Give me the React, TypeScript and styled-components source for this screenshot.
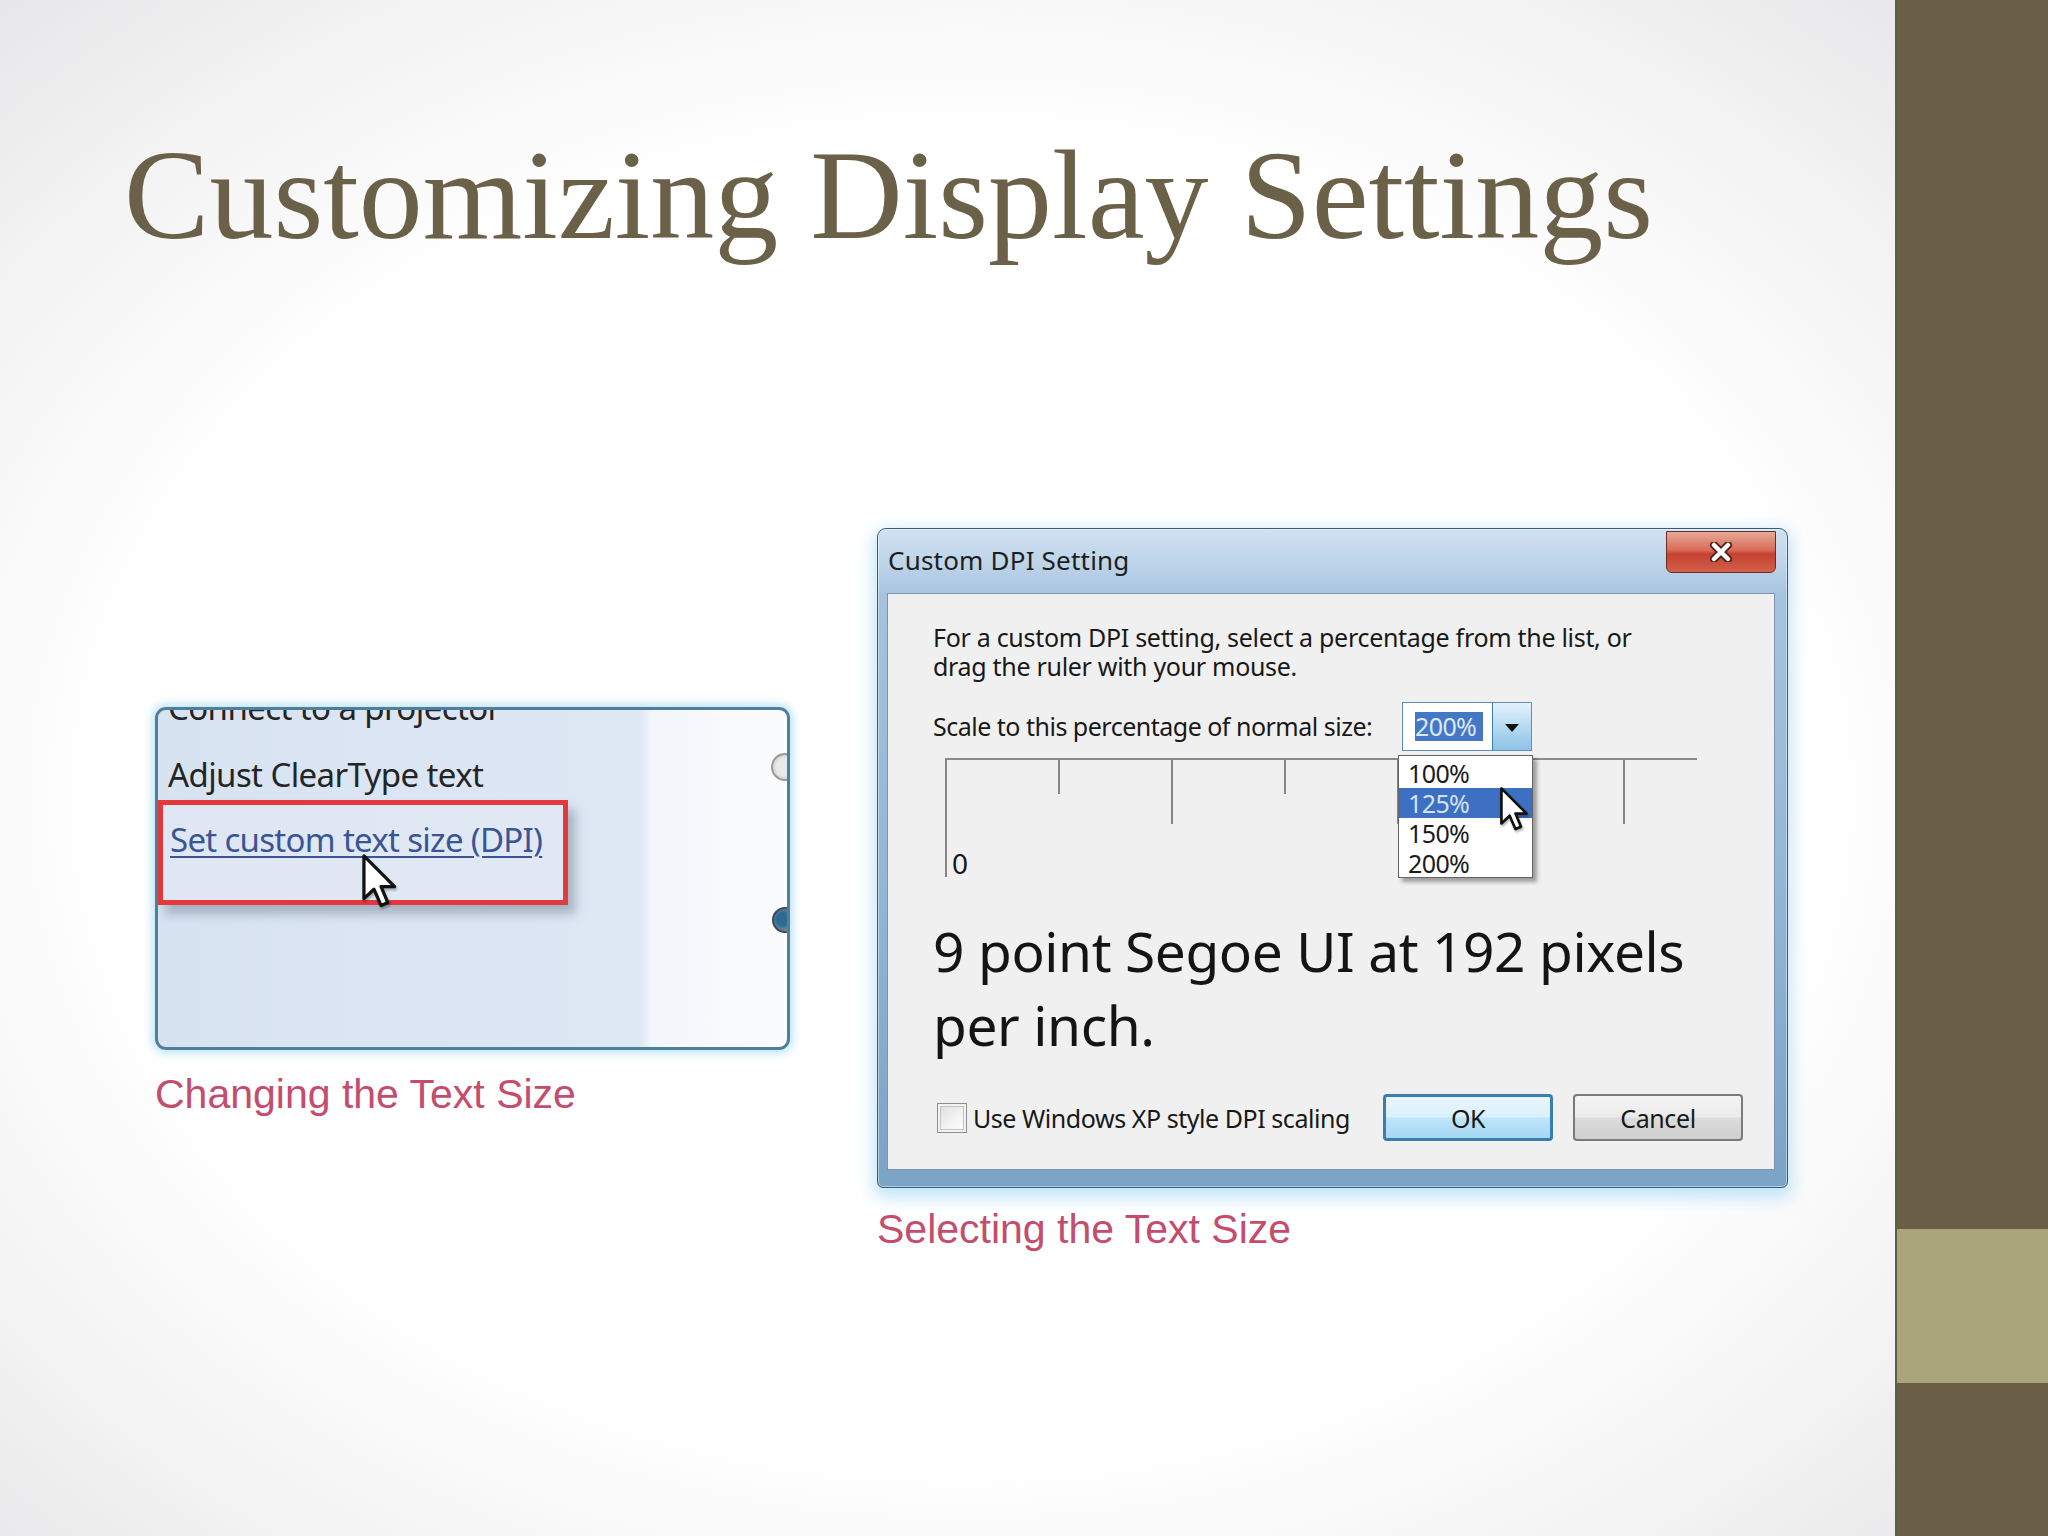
import styled, { createGlobalStyle } from "styled-components";

const GlobalStyle = createGlobalStyle`
  *, *::before, *::after {
    box-sizing: border-box;
  }
  html, body {
    margin: 0;
    padding: 0;
  }
  body {
    width: 2048px;
    height: 1536px;
    overflow: hidden;
    font-family: "Noto Sans", sans-serif;
  }
`;

const Slide = styled.div`
  display: flex;
  width: 2048px;
  height: 1536px;
  background: radial-gradient(
    ellipse 72% 74% at 47% 52%,
    #ffffff 58%,
    #f2f2f3 80%,
    #e4e4e6 100%
  );
`;

const Content = styled.main`
  flex: 1;
  display: flex;
  flex-direction: column;
`;

const Title = styled.h1`
  margin: 131px 0 0 124px;
  font-family: "Liberation Serif", "Times New Roman", serif;
  font-weight: 400;
  font-size: 128px;
  line-height: 128px;
  color: #6a6148;
  white-space: nowrap;
`;

const Figures = styled.div`
  display: flex;
  align-items: flex-start;
  gap: 87px;
  margin: 269px 0 0 155px;
`;

const Figure = styled.figure<{ $offset?: number }>`
  margin: ${(p) => p.$offset ?? 0}px 0 0;
  display: flex;
  flex-direction: column;
`;

const Caption = styled.figcaption<{ $gap: number }>`
  margin-top: ${(p) => p.$gap}px;
  font-family: "Liberation Sans", Arial, sans-serif;
  font-size: 41px;
  line-height: 48px;
  color: #c44c6c;
  white-space: nowrap;
`;

const Sidebar = styled.aside`
  flex: none;
  width: 153px;
  display: flex;
  flex-direction: column;
  background: #6a5e47;
  border-left: 2px solid #5d6048;
`;

const SidebarBand = styled.div`
  margin-top: 1229px;
  height: 154px;
  background: #aba57c;
`;

/* ---------- mouse pointer ---------- */

const Pointer = styled.svg<{ $x: number; $y: number }>`
  position: absolute;
  left: ${(p) => p.$x}px;
  top: ${(p) => p.$y}px;
  filter: drop-shadow(1px 2px 1px rgba(0, 0, 0, 0.3));
`;

const Arrow = ({ x, y, h }: { x: number; y: number; h: number }) => (
  <Pointer $x={x} $y={y} width={(h * 13) / 19} height={h} viewBox="0 0 13 19">
    <path
      d="M1 1 L1 15.5 L4.4 12.3 L6.8 17.8 L9.1 16.8 L6.8 11.4 L11.4 11.4 Z"
      fill="#ffffff"
      stroke="#111111"
      strokeWidth="1.1"
      strokeLinejoin="round"
    />
  </Pointer>
);

/* ---------- control panel snippet ---------- */

const Panel = styled.div`
  position: relative;
  width: 635px;
  height: 343px;
  padding-left: 10px;
  border: 3px solid #4f7f99;
  border-radius: 11px;
  overflow: hidden;
  background: linear-gradient(
    90deg,
    #d8e3f2 0%,
    #dee7f4 76.5%,
    #f3f6fb 78.5%,
    #fbfcfe 100%
  );
  box-shadow: 0 0 9px 3px rgba(165, 218, 244, 0.75);
  font-family: "Noto Sans", "Open Sans", sans-serif;
`;

const PanelItem = styled.div<{ $top: number }>`
  margin-top: ${(p) => p.$top}px;
  font-size: 33px;
  line-height: 40px;
  letter-spacing: -0.6px;
  color: #242424;
  white-space: nowrap;
`;

const Highlight = styled.div`
  position: relative;
  margin: 5px 0 0 -10px;
  width: 410px;
  height: 105px;
  padding: 15px 0 0 7px;
  border: 5px solid #e3393c;
  background: rgba(226, 234, 244, 0.6);
  box-shadow: 7px 9px 10px rgba(70, 80, 100, 0.35);
`;

const PanelLink = styled.a`
  display: block;
  font-size: 33px;
  line-height: 40px;
  letter-spacing: -0.7px;
  color: #3a5495;
  text-decoration: underline;
  text-decoration-thickness: 2px;
  text-underline-offset: 4px;
  white-space: nowrap;
`;

const EdgeKnob = styled.span<{ $top: number; $size: number; $dark?: boolean }>`
  position: absolute;
  right: -${(p) => p.$size / 2 - 2}px;
  top: ${(p) => p.$top}px;
  width: ${(p) => p.$size}px;
  height: ${(p) => p.$size}px;
  border-radius: 50%;
  border: 2px solid ${(p) => (p.$dark ? "#3c4a58" : "#9a9a9a")};
  background: ${(p) =>
    p.$dark
      ? "radial-gradient(circle at 40% 45%, #2d6b93 0 35%, #7d8c99 70%)"
      : "radial-gradient(circle, #e9e9e9 0 50%, #bdbdbd 100%)"};
`;

/* ---------- Custom DPI dialog ---------- */

const Window = styled.div`
  width: 911px;
  height: 660px;
  display: flex;
  flex-direction: column;
  padding: 0 12px 17px 9px;
  border: 1px solid #2f607f;
  border-radius: 9px 9px 6px 6px;
  background: linear-gradient(
    180deg,
    #d0e1f1 0%,
    #bad2e8 6%,
    #a6c3de 10%,
    #92b6d5 55%,
    #7aa3c6 100%
  );
  box-shadow: inset 0 0 0 1px rgba(255, 255, 255, 0.45),
    0 6px 16px 4px rgba(150, 210, 240, 0.55);
  font-family: "Noto Sans", "Open Sans", sans-serif;
  color: #181818;
`;

const TitleBar = styled.div`
  height: 64px;
  flex: none;
  display: flex;
  align-items: flex-start;
  justify-content: space-between;
  margin-right: -1px;
`;

const WindowTitle = styled.div`
  margin-top: 16px;
  padding-left: 1px;
  font-size: 26px;
  line-height: 30px;
  letter-spacing: 0.2px;
  color: #1e1e1e;
`;

const CloseButton = styled.div`
  margin-top: 2px;
  width: 110px;
  height: 42px;
  display: flex;
  align-items: center;
  justify-content: center;
  border: 1px solid #6b2c24;
  border-radius: 0 0 6px 6px;
  background: linear-gradient(
    180deg,
    #e8a999 0%,
    #d86c58 45%,
    #c5412f 55%,
    #d2604c 100%
  );
`;

const Client = styled.div`
  flex: 1;
  display: flex;
  flex-direction: column;
  padding: 29px 31px 27px 45px;
  border: 1px solid #7d94ab;
  background: #f0f0f0;
`;

const Para = styled.p`
  margin: 0;
  font-size: 25px;
  line-height: 29px;
  letter-spacing: -0.3px;
  white-space: nowrap;
`;

const ScaleRow = styled.div`
  margin-top: 21px;
  height: 49px;
  display: flex;
  align-items: center;
`;

const ScaleLabel = styled.span`
  flex: none;
  width: 469px;
  font-size: 25px;
  line-height: 29px;
  letter-spacing: -0.5px;
  white-space: nowrap;
`;

const Combo = styled.div`
  position: relative;
  width: 130px;
  height: 49px;
  display: flex;
  border: 1px solid #5f8fb8;
  background: #ffffff;
`;

const ComboValue = styled.div`
  flex: 1;
  display: flex;
  align-items: center;
  padding-left: 12px;
`;

const SelectedText = styled.span`
  width: 68px;
  font-size: 25px;
  line-height: 29px;
  letter-spacing: -0.6px;
  background: #4578c4;
  color: #dce8f8;
`;

const ComboButton = styled.div`
  width: 39px;
  display: flex;
  align-items: center;
  justify-content: center;
  border-left: 1px solid #3c7fb1;
  background: linear-gradient(180deg, #e4f3fc 0%, #b6dbf2 50%, #8ec3e7 100%);
`;

const DownTriangle = styled.span`
  width: 0;
  height: 0;
  border-left: 7px solid transparent;
  border-right: 7px solid transparent;
  border-top: 8px solid #111;
  margin-top: 3px;
`;

const DropList = styled.ul`
  position: absolute;
  left: -5px;
  top: 52px;
  width: 135px;
  height: 123px;
  margin: 0;
  padding: 2px 0 0;
  list-style: none;
  border: 1px solid #646464;
  background: #ffffff;
  box-shadow: 4px 4px 4px rgba(0, 0, 0, 0.35);
  z-index: 2;
`;

const DropItem = styled.li<{ $active?: boolean }>`
  height: 30px;
  padding-left: 9px;
  font-size: 25px;
  line-height: 30px;
  letter-spacing: -0.6px;
  background: ${(p) => (p.$active ? "#3d70c2" : "transparent")};
  color: ${(p) => (p.$active ? "#d3e2f7" : "#1b1b1b")};
`;

const Ruler = styled.div`
  margin: 7px 0 0 12px;
  width: 752px;
  height: 119px;
  display: flex;
  border-top: 2px solid #8a8a8a;
`;

const Tick = styled.div<{ $h: number; $w?: number }>`
  flex: none;
  width: ${(p) => p.$w ?? 113}px;
  height: ${(p) => p.$h}px;
  border-left: 2px solid #858585;
`;

const ZeroTick = styled(Tick)`
  display: flex;
  align-items: flex-end;
  padding-left: 5px;
  font-size: 28px;
  line-height: 28px;
`;

const Sample = styled.div`
  margin-top: 37px;
  font-size: 55px;
  line-height: 74px;
  letter-spacing: -0.4px;
  color: #141414;
  white-space: nowrap;
`;

const Footer = styled.div`
  margin-top: 32px;
  height: 47px;
  display: flex;
  align-items: center;
`;

const CheckGroup = styled.label`
  display: flex;
  align-items: center;
  gap: 6px;
  margin-left: 4px;
  font-size: 25px;
  letter-spacing: -0.45px;
  white-space: nowrap;
`;

const CheckBox = styled.span`
  width: 30px;
  height: 30px;
  border: 1px solid #8e8f8f;
  background: linear-gradient(135deg, #dcdcdc 0%, #f4f4f4 60%, #ffffff 100%);
  box-shadow: inset 0 0 0 2px #f2f2f2, inset 0 0 0 3px #c4c4c4;
`;

const ButtonGroup = styled.div`
  margin-left: auto;
  display: flex;
  gap: 20px;
`;

const DialogButton = styled.div<{ $focused?: boolean }>`
  width: 170px;
  height: 47px;
  display: flex;
  align-items: center;
  justify-content: center;
  font-size: 25px;
  letter-spacing: -0.4px;
  border-radius: 4px;
  border: ${(p) => (p.$focused ? "3px solid #3b7eb2" : "2px solid #7a7a7a")};
  background: ${(p) =>
    p.$focused
      ? "linear-gradient(180deg, #eaf6fd 0%, #d9f0fc 48%, #bde5fb 52%, #a6d8f4 100%)"
      : "linear-gradient(180deg, #f4f4f4 0%, #ebebeb 48%, #dcdcdc 52%, #cfcfcf 100%)"};
`;

const CloseGlyph = () => (
  <svg width="26" height="20" viewBox="0 0 26 20">
    <path d="M6 3 L20 17 M20 3 L6 17" stroke="#4a1f1a" strokeWidth="8" strokeLinecap="round" />
    <path d="M6 3 L20 17 M20 3 L6 17" stroke="#ffffff" strokeWidth="4.5" strokeLinecap="round" />
  </svg>
);

const ControlPanelShot = () => (
  <Panel>
    <PanelItem $top={-22}>Connect to a projector</PanelItem>
    <PanelItem $top={27}>Adjust ClearType text</PanelItem>
    <Highlight>
      <PanelLink>Set custom text size (DPI)</PanelLink>
      <Arrow x={198} y={48} h={56} />
    </Highlight>
    <EdgeKnob $top={43} $size={28} />
    <EdgeKnob $top={197} $size={26} $dark />
  </Panel>
);

const DpiDialog = () => (
  <Window>
    <TitleBar>
      <WindowTitle>Custom DPI Setting</WindowTitle>
      <CloseButton>
        <CloseGlyph />
      </CloseButton>
    </TitleBar>
    <Client>
      <Para>
        For a custom DPI setting, select a percentage from the list, or
        <br />
        drag the ruler with your mouse.
      </Para>
      <ScaleRow>
        <ScaleLabel>Scale to this percentage of normal size:</ScaleLabel>
        <Combo>
          <ComboValue>
            <SelectedText>200%</SelectedText>
          </ComboValue>
          <ComboButton>
            <DownTriangle />
          </ComboButton>
          <DropList>
            <DropItem>100%</DropItem>
            <DropItem $active>125%</DropItem>
            <DropItem>150%</DropItem>
            <DropItem>200%</DropItem>
            <Arrow x={100} y={30} h={46} />
          </DropList>
        </Combo>
      </ScaleRow>
      <Ruler>
        <ZeroTick $h={117}>0</ZeroTick>
        <Tick $h={34} />
        <Tick $h={64} />
        <Tick $h={34} />
        <Tick $h={64} />
        <Tick $h={34} />
        <Tick $h={64} $w={75} />
      </Ruler>
      <Sample>
        9 point Segoe UI at 192 pixels
        <br />
        per inch.
      </Sample>
      <Footer>
        <CheckGroup>
          <CheckBox />
          Use Windows XP style DPI scaling
        </CheckGroup>
        <ButtonGroup>
          <DialogButton $focused>OK</DialogButton>
          <DialogButton>Cancel</DialogButton>
        </ButtonGroup>
      </Footer>
    </Client>
  </Window>
);

export default function App() {
  return (
    <>
      <GlobalStyle />
      <Slide>
        <Content>
          <Title>Customizing Display Settings</Title>
          <Figures>
            <Figure $offset={179}>
              <ControlPanelShot />
              <Caption $gap={20}>Changing the Text Size</Caption>
            </Figure>
            <Figure>
              <DpiDialog />
              <Caption $gap={17}>Selecting the Text Size</Caption>
            </Figure>
          </Figures>
        </Content>
        <Sidebar>
          <SidebarBand />
        </Sidebar>
      </Slide>
    </>
  );
}
